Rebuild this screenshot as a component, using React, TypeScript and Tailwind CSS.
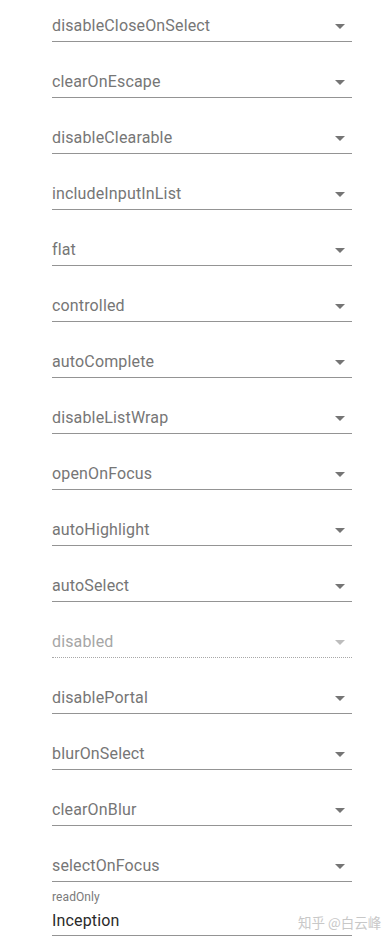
import React from "react";

// 選択フィールドのラベル一覧
const options = [
  "disableCloseOnSelect",
  "clearOnEscape",
  "disableClearable",
  "includeInputInList",
  "flat",
  "controlled",
  "autoComplete",
  "disableListWrap",
  "openOnFocus",
  "autoHighlight",
  "autoSelect",
  "disabled",
  "disablePortal",
  "blurOnSelect",
  "clearOnBlur",
  "selectOnFocus",
];

function ArrowDrop({ disabled }: { disabled?: boolean }) {
  return (
    <svg width="24" height="24" viewBox="0 0 24 24" className="shrink-0 mt-[1px]">
      <path d="M7 10l5 5 5-5z" fill={disabled ? "#bdbdbd" : "#757575"} />
    </svg>
  );
}

function SelectRow({ label }: { label: string }) {
  const disabled = label === "disabled";
  return (
    <div className="h-[56px]">
      <div
        className={`h-[42px] pt-[13px] flex items-start justify-between border-b ${
          disabled ? "border-dotted border-[#a8a8a8]" : "border-[#949494]"
        }`}
      >
        <span
          className={`mt-[1px] text-[16px] leading-6 tracking-[0.15px] ${
            disabled ? "text-[#a6a6a6]" : "text-[#767676]"
          }`}
        >
          {label}
        </span>
        <ArrowDrop disabled={disabled} />
      </div>
    </div>
  );
}

export default function App() {
  return (
    <div className="w-[392px] min-h-[942px] bg-white font-['Roboto',sans-serif] overflow-hidden">
      <div className="ml-[52px] w-[300px]">
        {options.map((o) => (
          <SelectRow key={o} label={o} />
        ))}

        {/* readOnly のテキストフィールド */}
        <div className="relative -mt-[14px] h-[54px] pt-[8px] border-b border-[#949494]">
          <div className="text-[12px] leading-[14px] text-[#7a7a7a] tracking-[0.1px]">readOnly</div>
          <div className="mt-[5px] text-[16px] leading-6 text-[#2a2a2a] tracking-[0.15px]">Inception</div>
          {/* 透かし */}
          <div className="absolute left-[246px] top-[30px] whitespace-nowrap text-[13.5px] leading-5 text-[#c8c8c8] font-['Noto_Sans_CJK_SC',sans-serif]">
            知乎 @白云峰
          </div>
        </div>
      </div>
    </div>
  );
}
